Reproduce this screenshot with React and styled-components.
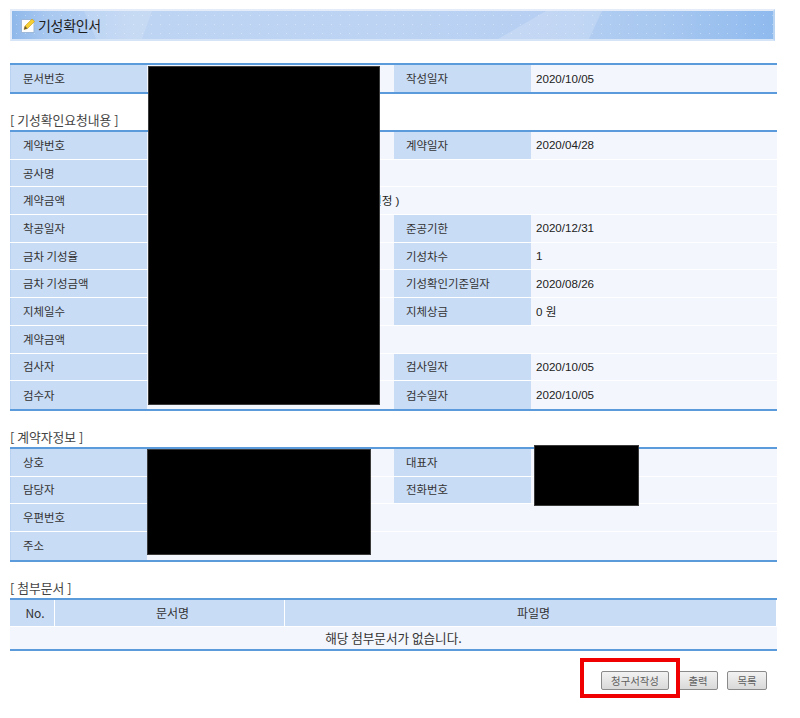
import styled, { createGlobalStyle } from 'styled-components';

const GlobalStyle = createGlobalStyle`
    html, body {
        margin: 0;
        padding: 0;
        background-color: #ffffff;
        font-family: "Noto Sans CJK KR", "Liberation Sans", sans-serif;
        color: #333333;
    }
`
const Page = styled.div`
    position: relative;
    width: 800px;
    height: 718px;
    padding: 9px 23px 0 10px;
    box-sizing: border-box;
    overflow: hidden;
`
const TitleBar = styled.div`
    position: relative;
    width: 765px;
    height: 32px;
    margin-bottom: 22px;
    box-sizing: border-box;
    display: flex;
    align-items: center;
    gap: 2px;
    padding-left: 9px;
    border: 2px solid #e3ecf8;
    border-bottom-color: #d5e4f7;
    border-right-color: #b9d3f3;
    background-image:
        radial-gradient(circle, #ffffff55 0.8px, transparent 1px),
        linear-gradient(90deg, #8fb8ea 0%, #aac9f0 5%, #bdd4f3 16%, #bcd3f3 50%, #b6cff2 70%, #a8c8f0 85%, #8fbaee 100%);
    background-size: 9px 9px, 100% 100%;

    &::before {
        content: '';
        position: absolute;
        inset: 0;
        background-color: #ffffff2e;
        clip-path: polygon(534px 0, 590px 0, 577px 100%, 486px 100%);
    }
    &::after {
        content: '';
        position: absolute;
        inset: 0;
        background-color: #ffffff26;
        clip-path: polygon(72px 0, 140px 0, 130px 100%, 84px 100%);
    }
`
const TitleText = styled.h1`
    position: relative;
    z-index: 1;
    margin: 0;
    font-size: 14px;
    font-weight: 400;
    letter-spacing: -0.3px;
    color: #1d1d1d;
`
const TitleIcon = styled.svg`
    position: relative;
    z-index: 1;
`
const Section = styled.section`
    width: 767px;
    margin-bottom: ${props => props.$gap}px;
`
const SectionTitle = styled.div`
    height: 16px;
    line-height: 16px;
    margin-bottom: 2px;
    font-size: 12.8px;
    color: #444444;
`
const Table = styled.div`
    border-top: 2px solid #5b9bdc;
    border-bottom: 2px solid #5b9bdc;
    background-color: #f3f6fc;
`
const Row = styled.div`
    display: grid;
    grid-template-columns: 137px 246px 138px 246px;
    height: ${props => props.$height || 27.7}px;
    box-sizing: border-box;
    border-bottom: 1px solid #ffffff;
    &:last-child {
        border-bottom: 0;
    }
`
const Label = styled.div`
    display: flex;
    align-items: center;
    padding: 0 0 1px 12px;
    background-color: #c9dcf5;
    font-size: 11.4px;
    color: #333333;
    border-left: 1px solid #b9d2f2;
`
const SideLabel = styled(Label)`
    margin-left: 1px;
    border-left: 0;
`
const Value = styled.div`
    display: flex;
    align-items: center;
    padding: 0 0 1px ${props => props.$indent || 5}px;
    grid-column: span ${props => props.$span || 1};
    font-family: "Liberation Sans", "Noto Sans CJK KR", sans-serif;
    font-size: 11.6px;
    color: #222222;
`
const DocHead = styled.div`
    display: grid;
    grid-template-columns: 45px 230px 1fr;
    height: 27px;
    border-bottom: 1px solid #ffffff;
    box-sizing: border-box;
`
const HeadCell = styled.div`
    display: flex;
    align-items: center;
    justify-content: center;
    padding: 0 0 1px 6px;
    background-color: #c9dcf5;
    border-right: 1px solid #ffffff;
    font-size: 12px;
    color: #333333;
`
const EmptyRow = styled.div`
    height: 22px;
    display: flex;
    align-items: center;
    justify-content: center;
    font-size: 12.6px;
    color: #333333;
`
const Actions = styled.div`
    display: flex;
    justify-content: flex-end;
    gap: 9px;
    width: 757px;
    margin-top: 20px;
`
const Button = styled.button`
    width: ${props => props.$width}px;
    height: 19px;
    padding: 0;
    box-sizing: border-box;
    border: 1px solid #8a8a8a;
    border-radius: 2px;
    background: linear-gradient(#f2f2f2, #d9d9d9);
    font-family: "Noto Sans CJK KR", sans-serif;
    font-size: 10.4px;
    color: #5f5f5f;
`
const Redaction = styled.div`
    position: absolute;
    left: ${props => props.$x}px;
    top: ${props => props.$y}px;
    width: ${props => props.$w}px;
    height: ${props => props.$h}px;
    box-sizing: border-box;
    border: 1px solid #3a3a3a;
    background-color: #000000;
`
const Highlight = styled.div`
    position: absolute;
    left: 580px;
    top: 658px;
    width: 100px;
    height: 40px;
    box-sizing: border-box;
    border: 4px solid #f00000;
`

const PencilIcon = () => (
    <TitleIcon width="15" height="15" viewBox="0 0 15 15">
        <rect x="0.5" y="1.5" width="12.5" height="13" fill="#fdfdfd" stroke="#9db8d8" />
        <path d="M3 11.5l1-3.5 7-7 2.5 2.5-7 7z" fill="#f6cf35" stroke="#c79a12" strokeWidth="0.6" />
        <path d="M3 11.5l1-3.5 2.5 2.5z" fill="#6a5a30" />
    </TitleIcon>
)

const requestRows = [
    ['계약번호', '', '계약일자', '2020/04/28'],
    ['공사명', ''],
    ['계약금액', '원정 )'],
    ['착공일자', '', '준공기한', '2020/12/31'],
    ['금차 기성율', '', '기성차수', '1'],
    ['금차 기성금액', '', '기성확인기준일자', '2020/08/26'],
    ['지체일수', '', '지체상금', '0 원'],
    ['계약금액', ''],
    ['검사자', '', '검사일자', '2020/10/05'],
    ['검수자', '', '검수일자', '2020/10/05'],
]

const contractorRows = [
    ['상호', '', '대표자', ''],
    ['담당자', '', '전화번호', ''],
    ['우편번호', ''],
    ['주소', ''],
]

const renderRow = (row) => (
    <Row key={row[0] + row[2]}>
        <Label>{row[0]}</Label>
        {row.length > 2 ? (
            <>
                <Value />
                <SideLabel>{row[2]}</SideLabel>
                <Value>{row[3]}</Value>
            </>
        ) : (
            <Value $span={3} $indent={row[1] ? 224 : 5}>{row[1]}</Value>
        )}
    </Row>
)

const App = () => {
    return (
        <Page>
            <GlobalStyle />
            <TitleBar>
                <PencilIcon />
                <TitleText>기성확인서</TitleText>
            </TitleBar>

            <Section $gap={18}>
                <Table>
                    <Row $height={27}>
                        <Label>문서번호</Label>
                        <Value />
                        <SideLabel>작성일자</SideLabel>
                        <Value>2020/10/05</Value>
                    </Row>
                </Table>
            </Section>

            <Section $gap={18}>
                <SectionTitle>[ 기성확인요청내용 ]</SectionTitle>
                <Table>{requestRows.map(renderRow)}</Table>
            </Section>

            <Section $gap={18}>
                <SectionTitle>[ 계약자정보 ]</SectionTitle>
                <Table>{contractorRows.map(renderRow)}</Table>
            </Section>

            <Section $gap={0}>
                <SectionTitle>[ 첨부문서 ]</SectionTitle>
                <Table>
                    <DocHead>
                        <HeadCell>No.</HeadCell>
                        <HeadCell>문서명</HeadCell>
                        <HeadCell>파일명</HeadCell>
                    </DocHead>
                    <EmptyRow>해당 첨부문서가 없습니다.</EmptyRow>
                </Table>
            </Section>

            <Actions>
                <Button $width={68}>청구서작성</Button>
                <Button $width={40}>출력</Button>
                <Button $width={40}>목록</Button>
            </Actions>

            <Redaction $x={148} $y={66} $w={232} $h={339} />
            <Redaction $x={147} $y={449} $w={224} $h={106} />
            <Redaction $x={534} $y={445} $w={105} $h={61} />
            <Highlight />
        </Page>
    )
}

export default App;
